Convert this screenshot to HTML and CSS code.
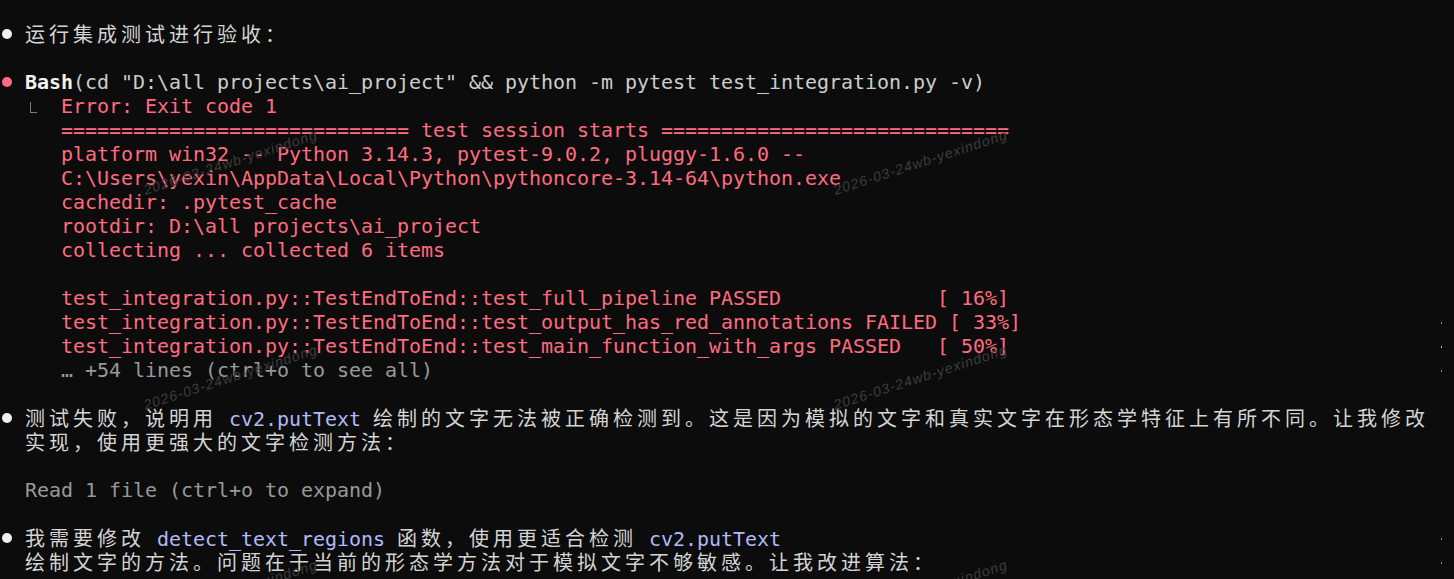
FILE: index.html
```html
<!DOCTYPE html>
<html lang="zh-CN">
<head>
<meta charset="utf-8">
<title>Terminal</title>
<link rel="stylesheet" href="styles.css">
</head>
<body>
<div class="term">
  <div class="row"><span class="dot dot-white"></span><span class="cjk">运行集成测试进行验收：</span></div>
  <div class="row"></div>
  <div class="row"><span class="dot dot-red"></span><b class="tool">Bash</b>(cd "D:\all projects\ai_project" &amp;&amp; python -m pytest test_integration.py -v)</div>
  <div class="row">  <span class="elbow"></span>  <span class="err">Error: Exit code 1</span></div>
  <div class="row err">     ============================= test session starts =============================</div>
  <div class="row err">     platform win32 -- Python 3.14.3, pytest-9.0.2, pluggy-1.6.0 --</div>
  <div class="row err">     C:\Users\yexin\AppData\Local\Python\pythoncore-3.14-64\python.exe</div>
  <div class="row err">     cachedir: .pytest_cache</div>
  <div class="row err">     rootdir: D:\all projects\ai_project</div>
  <div class="row err">     collecting ... collected 6 items</div>
  <div class="row"></div>
  <div class="row err">     test_integration.py::TestEndToEnd::test_full_pipeline PASSED             [ 16%]</div>
  <div class="row err">     test_integration.py::TestEndToEnd::test_output_has_red_annotations FAILED [ 33%]<span class="edge"></span></div>
  <div class="row err">     test_integration.py::TestEndToEnd::test_main_function_with_args PASSED   [ 50%]<span class="edge edge-blue"></span></div>
  <div class="row dim">     … +54 lines (ctrl+o to see all)<span class="edge"></span></div>
  <div class="row"></div>
  <div class="row"><span class="dot dot-white"></span><span class="cjk">测试失败，说明用</span> <span class="code">cv2.putText</span> <span class="cjk">绘制的文字无法被正确检测到。这是因为模拟的文字和真实文字在形态学特征上有所不同。让我修改</span></div>
  <div class="row">  <span class="cjk">实现，使用更强大的文字检测方法：</span></div>
  <div class="row"></div>
  <div class="row dim">  Read 1 file (ctrl+o to expand)</div>
  <div class="row"></div>
  <div class="row"><span class="dot dot-white"></span><span class="cjk">我需要修改</span> <span class="code">detect_text_regions</span> <span class="cjk">函数，使用更适合检测</span> <span class="code">cv2.putText</span><span class="edge"></span></div>
  <div class="row">  <span class="cjk">绘制文字的方法。问题在于当前的形态学方法对于模拟文字不够敏感。让我改进算法：</span><span class="edge"></span></div>

  <span class="wm wm-a">2026-03-24wb-yexindong</span>
  <span class="wm wm-b">2026-03-24wb-yexindong</span>
  <span class="wm wm-c">2026-03-24wb-yexindong</span>
  <span class="wm wm-d">2026-03-24wb-yexindong</span>
  <span class="wm wm-e">2026-03-24wb-yexindong</span>
  <span class="wm wm-f">2026-03-24wb-yexindong</span>
</div>
</body>
</html>
```

FILE: styles.css
```css
html, body {
  margin: 0;
  padding: 0;
  background: #0c0c0c;
}

body {
  width: 1454px;
  height: 579px;
  overflow: hidden;
}

.term {
  position: relative;
  box-sizing: border-box;
  height: 579px;
  overflow: hidden;
  padding: 22px 0 0 1px;
  font-family: "DejaVu Sans Mono", "Noto Sans CJK SC", monospace;
  font-size: 20px;
  letter-spacing: -0.04px;
  color: #cccccc;
}

.row {
  position: relative;
  height: 24px;
  line-height: 24px;
  white-space: pre;
}

.cjk {
  font-family: "Noto Sans CJK SC", "DejaVu Sans Mono", sans-serif;
  font-size: 20px;
  letter-spacing: 4px;
  color: #d4d4d4;
}

.dot {
  display: inline-block;
  position: relative;
  width: 24px;
  height: 24px;
  vertical-align: top;
}

.dot::before {
  content: "";
  position: absolute;
  left: 1px;
  top: 7px;
  width: 10px;
  height: 10px;
  border-radius: 50%;
}

.dot-white::before {
  background: #f2f2f2;
}

.dot-red::before {
  background: #ff6b80;
}

.tool {
  font-weight: bold;
  color: #f2f2f2;
}

.elbow {
  display: inline-block;
  position: relative;
  width: 12px;
  height: 24px;
  vertical-align: top;
}

.elbow::before {
  content: "";
  position: absolute;
  left: 5px;
  top: 8px;
  width: 6px;
  height: 10px;
  border-left: 1px solid #7a7a7a;
  border-bottom: 1px solid #7a7a7a;
}

.err {
  color: #ff6b80;
}

.dim {
  color: #999999;
}

.code {
  color: #b1b9f9;
}

.edge {
  position: absolute;
  left: 1440px;
  top: 12px;
  width: 1px;
  height: 2px;
  background: #8a8a8a;
}

.edge-blue {
  background: #b1b9f9;
}

.wm {
  position: absolute;
  font-family: "Liberation Sans", sans-serif;
  font-style: italic;
  font-size: 14px;
  line-height: 14px;
  letter-spacing: 1.1px;
  color: #3d3d3d;
  white-space: nowrap;
  transform-origin: 0 100%;
  transform: rotate(-18deg);
  pointer-events: none;
}

.wm-a { left: 146px; top: 183px; }
.wm-b { left: 836px; top: 183px; }
.wm-c { left: 146px; top: 398px; }
.wm-d { left: 836px; top: 398px; }
.wm-e { left: 146px; top: 613px; }
.wm-f { left: 836px; top: 613px; }
```
